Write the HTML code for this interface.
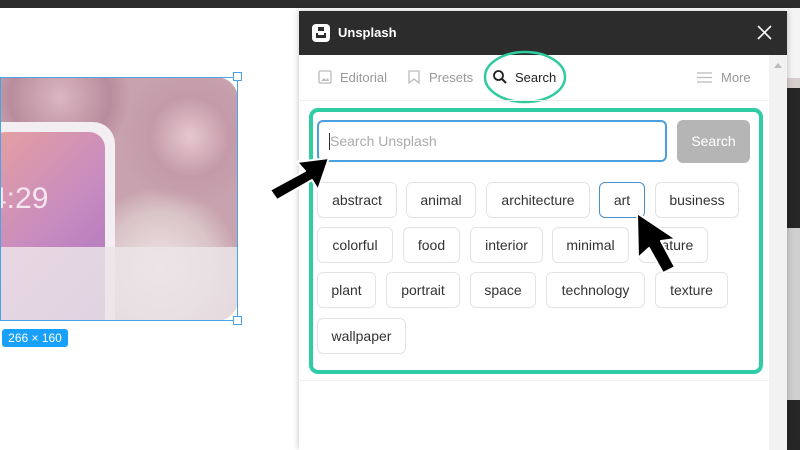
<!DOCTYPE html>
<html><head><style>
*{box-sizing:border-box;margin:0;padding:0}
body{width:800px;height:450px;overflow:hidden;background:#fff;font-family:"Liberation Sans",sans-serif;position:relative}
.a{position:absolute}
.chip{position:absolute;height:36px;border:1px solid #e3e3e3;border-radius:6px;font-size:14px;color:#333;display:flex;align-items:center;justify-content:center}
.tab{position:absolute;top:70px;font-size:13px;color:#999}
</style></head><body>
<div class="a" style="left:0;top:0;width:800px;height:8px;background:#2c2c2c"></div>
<div class="a" style="left:787px;top:8px;width:13px;height:442px;background:#f4f4f4"></div>
<div class="a" style="left:787px;top:78px;width:13px;height:10px;background:#d9cfcf"></div>
<div class="a" style="left:787px;top:88px;width:13px;height:140px;background:#262626"></div>
<div class="a" style="left:787px;top:228px;width:13px;height:172px;background:#cfcfcf"></div>
<div class="a" style="left:787px;top:400px;width:13px;height:50px;background:#262626"></div>
<div class="a" style="left:0;top:77px;width:238px;height:244px;border-radius:0 22px 22px 0;overflow:hidden;background:radial-gradient(circle at 190px 60px,#e6c8d0 0,#c49aa8 40px,transparent 70px),radial-gradient(circle at 160px 190px,#efe2e4 0,#d9c4c8 55px,transparent 80px),radial-gradient(circle at 60px 20px,#dcb6c2 0,#b88c9c 50px,transparent 70px),#c8a2ae">
  <div class="a" style="left:-20px;top:45px;width:135px;height:220px;border-radius:22px;background:#f2eef2"></div>
  <div class="a" style="left:-10px;top:55px;width:115px;height:200px;border-radius:16px;background:linear-gradient(135deg,#e6a0a0,#c78bc0 50%,#a670c0)"></div>
  <div class="a" style="left:-10px;top:105px;font-size:30px;color:#f6e6f0;font-weight:300">4:29</div>
  <div class="a" style="left:0;top:170px;width:238px;height:74px;background:rgba(235,228,232,.85)"></div>
</div>
<div class="a" style="left:0;top:77px;width:238px;height:244px;border:1px solid #4aa3e8"></div>
<div class="a" style="left:233px;top:72px;width:9px;height:9px;border:1px solid #4aa3e8;background:#fff"></div>
<div class="a" style="left:233px;top:316px;width:9px;height:9px;border:1px solid #4aa3e8;background:#fff"></div>
<div class="a" style="left:2px;top:329px;width:66px;height:18px;border-radius:3px;background:#18a0fb;color:#fff;font-size:12px;line-height:18px;text-align:center">266 × 160</div>
<div class="a" style="left:299px;top:11px;width:488px;height:439px;background:#fff;box-shadow:0 0 6px rgba(0,0,0,.25)"></div>
<div class="a" style="left:299px;top:11px;width:488px;height:44px;background:#2c2c2c"></div>
<div class="a" style="left:312px;top:24px;width:18px;height:18px;border-radius:4px;background:#fff"></div>
<div class="a" style="left:318px;top:27px;width:6px;height:4px;background:#2c2c2c"></div>
<div class="a" style="left:316px;top:33px;width:10px;height:5px;background:#2c2c2c"></div>
<div class="a" style="left:318px;top:33px;width:6px;height:2px;background:#fff"></div>
<div class="a" style="left:338px;top:25px;font-size:13px;font-weight:bold;color:#fff">Unsplash</div>
<svg class="a" style="left:757px;top:25px" width="15" height="15"><path d="M1 1L14 14M14 1L1 14" stroke="#fff" stroke-width="1.6"/></svg>
<div class="a" style="left:769px;top:55px;width:18px;height:395px;background:#f2f2f2"></div>
<svg class="a" style="left:774px;top:63px" width="8" height="5"><path d="M0 5L4 0L8 5Z" fill="#bbb"/></svg>
<svg class="a" style="left:318px;top:70px" width="14" height="14"><rect x="1" y="1" width="12" height="12" rx="1" fill="none" stroke="#bbb" stroke-width="1.3"/><path d="M3 11L6 8L8 10L10 8L11 11Z" fill="#bbb"/></svg>
<div class="tab" style="left:340px">Editorial</div>
<svg class="a" style="left:408px;top:70px" width="12" height="14"><path d="M1 1H11V13L6 9L1 13Z" fill="none" stroke="#bbb" stroke-width="1.3"/></svg>
<div class="tab" style="left:429px">Presets</div>
<svg class="a" style="left:492px;top:69px" width="16" height="16"><circle cx="6.5" cy="6.5" r="4.5" fill="none" stroke="#222" stroke-width="1.8"/><path d="M10 10L14 14" stroke="#222" stroke-width="2"/></svg>
<div class="tab" style="left:515px;color:#222">Search</div>
<svg class="a" style="left:697px;top:72px" width="15" height="11"><path d="M0 1H15M0 5.5H15M0 10H15" stroke="#bbb" stroke-width="1.3"/></svg>
<div class="tab" style="left:721px">More</div>
<svg class="a" style="left:480px;top:48px" width="90" height="60"><ellipse cx="45" cy="29" rx="40" ry="25" fill="none" stroke="#2fcb9f" stroke-width="2.5"/></svg>
<div class="a" style="left:299px;top:100px;width:470px;height:1px;background:#eee"></div>
<div class="a" style="left:299px;top:380px;width:470px;height:1px;background:#eee"></div>
<div class="a" style="left:309px;top:108px;width:454px;height:266px;border:4px solid #2fcca5;border-radius:9px"></div>
<div class="a" style="left:317px;top:120px;width:350px;height:42px;border:2px solid #4aa0de;border-radius:6px"></div>
<div class="a" style="left:329px;top:133px;width:1px;height:17px;background:#333"></div>
<div class="a" style="left:330px;top:133px;font-size:14px;color:#aaa">Search Unsplash</div>
<div class="a" style="left:677px;top:120px;width:73px;height:43px;border-radius:6px;background:#b5b5b5;color:#fff;font-size:14px;line-height:43px;text-align:center">Search</div>
<div class="chip" style="left:317px;top:182px;width:80px">abstract</div>
<div class="chip" style="left:406px;top:182px;width:70px">animal</div>
<div class="chip" style="left:486px;top:182px;width:104px">architecture</div>
<div class="chip" style="left:599px;top:182px;width:46px;border-color:#4a90c8">art</div>
<div class="chip" style="left:655px;top:182px;width:84px">business</div>
<div class="chip" style="left:317px;top:227px;width:76px">colorful</div>
<div class="chip" style="left:403px;top:227px;width:57px">food</div>
<div class="chip" style="left:470px;top:227px;width:73px">interior</div>
<div class="chip" style="left:552px;top:227px;width:77px">minimal</div>
<div class="chip" style="left:639px;top:227px;width:69px">nature</div>
<div class="chip" style="left:317px;top:272px;width:59px">plant</div>
<div class="chip" style="left:386px;top:272px;width:74px">portrait</div>
<div class="chip" style="left:470px;top:272px;width:66px">space</div>
<div class="chip" style="left:546px;top:272px;width:99px">technology</div>
<div class="chip" style="left:655px;top:272px;width:73px">texture</div>
<div class="chip" style="left:317px;top:318px;width:89px">wallpaper</div>
<svg class="a" style="left:265px;top:152px" width="70" height="52"><path d="M64 6L32 10L40 19L5 38L12 48L47 28L53 38Z" fill="#000" stroke="#fff" stroke-width="2" stroke-linejoin="round"/></svg>
<svg class="a" style="left:630px;top:208px" width="55" height="70"><path d="M7 5L8 50L19 40L33 65L45 59L31 33L46 31Z" fill="#000" stroke="#fff" stroke-width="2" stroke-linejoin="round"/></svg>
</body></html>
